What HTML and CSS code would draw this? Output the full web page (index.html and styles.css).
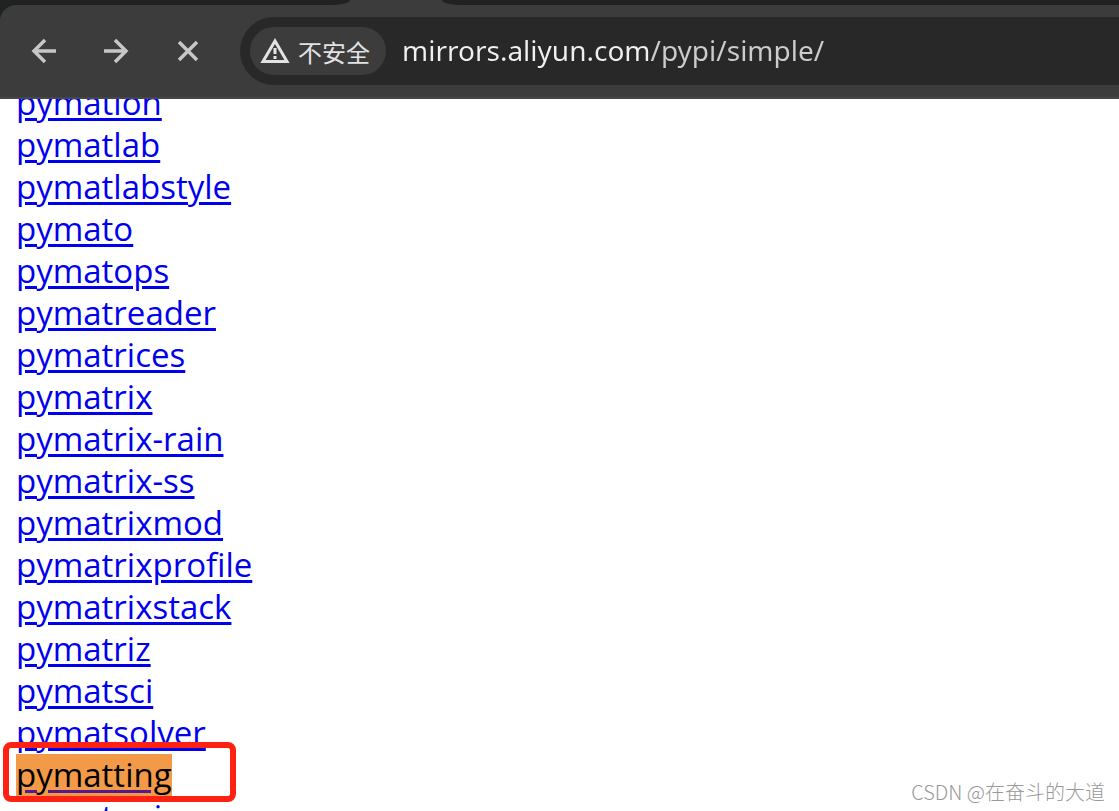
FILE: index.html
```
<!DOCTYPE html>
<html lang="zh-CN">
  <head>
    <meta charset="UTF-8" />
    <meta name="viewport" content="width=device-width, initial-scale=1.0" />
    <title>Simple Index</title>
    <link rel="stylesheet" href="styles.css">
  </head>
  <body>
    <header class="browser">
      <div class="tab-strip">
        <div class="tab tab-left"></div>
        <div class="tab tab-right"></div>
      </div>
      <div class="toolbar">
        <button class="nav-button" type="button" aria-label="Back">
          <svg width="26" height="26" viewBox="0 0 26 26" fill="none" stroke="currentColor" stroke-width="3.500">
            <path d="M25 13H3M14 2L3 13l11 11"></path>
          </svg>
        </button>
        <button class="nav-button" type="button" aria-label="Forward">
          <svg width="26" height="26" viewBox="0 0 26 26" fill="none" stroke="currentColor" stroke-width="3.500">
            <path d="M1 13h22M12 2l11 11-11 11"></path>
          </svg>
        </button>
        <button class="nav-button" type="button" aria-label="Stop">
          <svg width="26" height="26" viewBox="0 0 26 26" fill="none" stroke="currentColor" stroke-width="3.500">
            <path d="M4 4l18 18M22 4L4 22"></path>
          </svg>
        </button>
        <div class="omnibox">
          <button class="security-chip" type="button">
            <svg width="30" height="26" viewBox="0 0 30 26" fill="none" stroke="currentColor" stroke-width="3">
              <path d="M15 3L3 23.500h24z"></path>
              <path d="M15 10v6M15 18v3"></path>
            </svg>
            <span>不安全</span>
          </button>
          <input class="url" type="text" aria-label="Address" value="mirrors.aliyun.com/pypi/simple/">
        </div>
      </div>
    </header>

    <main class="page">
      <ul class="packages">
        <li><a href="pymation/">pymation</a></li>
        <li><a href="pymatlab/">pymatlab</a></li>
        <li><a href="pymatlabstyle/">pymatlabstyle</a></li>
        <li><a href="pymato/">pymato</a></li>
        <li><a href="pymatops/">pymatops</a></li>
        <li><a href="pymatreader/">pymatreader</a></li>
        <li><a href="pymatrices/">pymatrices</a></li>
        <li><a href="pymatrix/">pymatrix</a></li>
        <li><a href="pymatrix-rain/">pymatrix-rain</a></li>
        <li><a href="pymatrix-ss/">pymatrix-ss</a></li>
        <li><a href="pymatrixmod/">pymatrixmod</a></li>
        <li><a href="pymatrixprofile/">pymatrixprofile</a></li>
        <li><a href="pymatrixstack/">pymatrixstack</a></li>
        <li><a href="pymatriz/">pymatriz</a></li>
        <li><a href="pymatsci/">pymatsci</a></li>
        <li><a href="pymatsolver/">pymatsolver</a></li>
        <li class="found"><a href="pymatting/">pymatting</a></li>
        <li><a href="pymatuning/">pymatuning</a></li>
      </ul>
      <p class="watermark">CSDN @在奋斗的大道</p>
    </main>
  </body>
</html>
```
FILE: styles.css
```
:root {
  --strip: #1f2221;
  --toolbar: #3c3c3c;
  --field: #282828;
  --icon: #c7c7c7;
  --link: #0000ee;
}

*,
*::after {
  box-sizing: border-box;
}

body {
  margin: 0;
  height: 100vh;
  display: flex;
  flex-direction: column;
  overflow: hidden;
  background: #ffffff;
  font-family: "Open Sans", "Noto Sans CJK SC", sans-serif;
}

/* Browser chrome */
.browser {
  flex: none;
  background: var(--strip);
}

.tab-strip {
  display: flex;
  gap: 92px;
  height: 5px;
  background: var(--toolbar);
}

.tab {
  background: var(--strip);
}

.tab-left {
  width: 350px;
  border-bottom-right-radius: 18px 5px;
}

.tab-right {
  flex: 1;
  border-bottom-left-radius: 18px 5px;
}

.toolbar {
  display: flex;
  align-items: center;
  height: 94px;
  padding-left: 8px;
  background: var(--toolbar);
  border-bottom: 2px solid #474747;
  border-top-left-radius: 16px;
}

.nav-button {
  width: 72px;
  height: 72px;
  padding: 0;
  display: flex;
  align-items: center;
  justify-content: center;
  border: 0;
  background: none;
  color: var(--icon);
}

.omnibox {
  flex: 1;
  display: flex;
  align-items: center;
  gap: 16px;
  height: 68px;
  margin-left: 16px;
  padding-left: 10px;
  background: var(--field);
  border-radius: 34px 0 0 34px;
}

.security-chip {
  flex: none;
  display: flex;
  align-items: center;
  gap: 8px;
  height: 48px;
  padding: 0 16px 0 10px;
  border: 0;
  border-radius: 24px;
  background: var(--toolbar);
  color: #e3e3e3;
  font-family: "Noto Sans CJK SC", sans-serif;
  font-size: 24px;
}

.url {
  flex: 1;
  min-width: 0;
  height: 48px;
  padding: 0 0 2px;
  border: 0;
  outline: 0;
  font-family: "Noto Sans", sans-serif;
  font-size: 28px;
  /* host is brighter than the path */
  background: linear-gradient(to right, #f0f0f0 248px, #cccccc 248px);
  -webkit-background-clip: text;
  background-clip: text;
  color: transparent;
}

/* Package index */
.page {
  flex: 1;
  min-height: 0;
  position: relative;
  overflow: hidden;
}

.packages {
  list-style: none;
  margin: -17px 0 0;
  padding: 0 16px;
  font-size: 33px;
  line-height: 42px;
}

.packages a {
  color: var(--link);
  text-decoration-thickness: 3px;
  text-underline-offset: 3px;
}

.found {
  position: relative;
  width: fit-content;
}

.packages .found a {
  display: block;
  background: #f29a48;
  color: #000000;
  text-decoration-color: #551a8b;
}

.found::after {
  content: "";
  position: absolute;
  top: -12px;
  left: -13px;
  width: 233px;
  height: 60px;
  border: 6px solid #ff2213;
  border-radius: 8px;
}

.watermark {
  position: absolute;
  right: 14px;
  bottom: 4px;
  margin: 0;
  color: #999999;
  font-family: "Noto Sans CJK SC", sans-serif;
  font-weight: 300;
  font-size: 20px;
  line-height: 30px;
}
```
